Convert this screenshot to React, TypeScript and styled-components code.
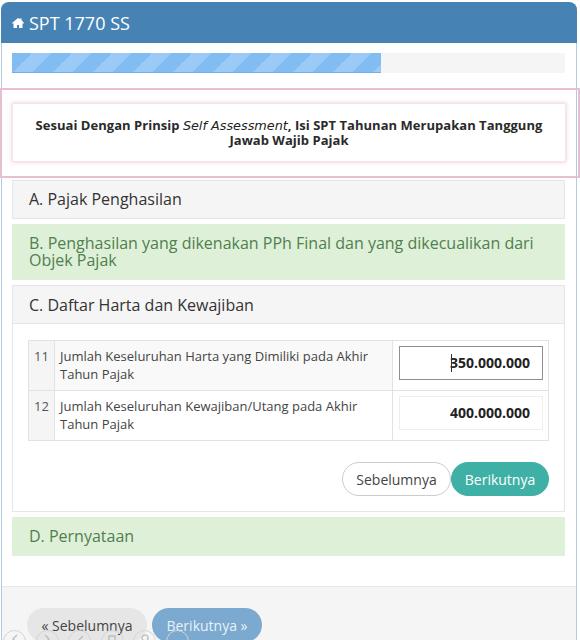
import React from "react";
import styled, { createGlobalStyle } from "styled-components";

const Global = createGlobalStyle`
  html, body { margin: 0; padding: 0; background: #fff; }
  body { width: 580px; height: 640px; overflow: hidden; font-family: "Open Sans", "Liberation Sans", sans-serif; color: #333; }
  * { box-sizing: border-box; }
`;
const Page = styled.div`
  position: relative; width: 580px; height: 640px; overflow: hidden; padding: 2px 3px 0 1px;
`;
const Panel = styled.section`
  height: 660px; border: 1px solid #b4cbdf; border-top: 0; border-radius: 8px 8px 0 0; display: flex; flex-direction: column;
`;
const Header = styled.header`
  height: 41px; margin: 0 -1px; flex: none; background: #4682b4; border-radius: 8px 8px 0 0; color: #fff;
  display: flex; align-items: center; gap: 5px; padding: 0 11px; font-size: 18px; line-height: 20px;
`;
const Body = styled.div`
  padding: 10px 10px 0 10px; flex: none; height: 543px;
`;
const Progress = styled.div`
  height: 20px; width: 553px; background: #f5f5f5; overflow: hidden;
`;
const Fill = styled.div<{ $pct: number }>`
  height: 100%; width: ${p => p.$pct}%; border-bottom: 1px solid #6fb0ec;
  background-color: #81bdf3;
  background-image: linear-gradient(-45deg, rgba(255,255,255,.2) 25%, transparent 25%, transparent 50%, rgba(255,255,255,.2) 50%, rgba(255,255,255,.2) 75%, transparent 75%);
  background-size: 40px 40px;
`;
const Notice = styled.div`
  margin-top: 30px; height: 59px; width: 554px; background: #fff; border: 1px solid #f6e3ea; box-shadow: 0 0 4px rgba(214,130,165,.45);
  display: flex; align-items: center; justify-content: center; text-align: center; padding: 0 10px;
  font-size: 13px; line-height: 14px; font-weight: 700; color: #2a2a2a; letter-spacing: .03px;
  em { font-family: "DejaVu Sans", sans-serif; font-size: 12.8px; line-height: 14px; letter-spacing: 0; font-style: italic; font-weight: 400; color: #222; }
`;
const Highlight = styled.div`
  position: absolute; left: 0; top: 88px; width: 580px; height: 90px; border: 2px solid #e8bfd0; pointer-events: none;
`;
const Accordion = styled.div`
  margin-top: 18px; display: flex; flex-direction: column; gap: 5px; width: 553px;
`;
const Title = styled.div<{ $done?: boolean }>`
  font-size: 16px; line-height: 17px; padding: ${p => (p.$done ? "11px 17px" : "0 16px")};
  background: ${p => (p.$done ? "#dff0d8" : "#f5f5f5")};
  color: ${p => (p.$done ? "#4f7f4f" : "#333")};
  ${p => !p.$done && "height: 39px; display: flex; align-items: center; border: 1px solid #e6e6e6;"}
`;
const OpenItem = styled.div`
  border: 1px solid #e6e6e6; height: 227px;
`;
const OpenTitle = styled.div`
  height: 38px; background: #f5f5f5; border-bottom: 1px solid #e6e6e6; font-size: 16px; display: flex; align-items: center; padding: 0 16px;
`;
const OpenBody = styled.div`
  padding: 16px 15px 15px;
`;
const Table = styled.table`
  width: 521px; border-collapse: collapse; table-layout: fixed; font-size: 13px; line-height: 18px; color: #444;
  td { border: 1px solid #e2e2e2; padding: 0; vertical-align: top; }
  tr:first-child td { background: #f9f9f9; }
`;
const Num = styled.td`
  width: 26px; text-align: center; background: #f5f5f5 !important; color: #555; padding-top: 6px !important;
`;
const Label = styled.td`
  width: 338px; padding: 6px 12px 0 5px !important; height: 50px;
`;
const ValueCell = styled.td`
  background: #fff !important; padding: 5px 5px 5px 6px !important;
`;
const Amount = styled.div<{ $active?: boolean }>`
  position: relative; height: 34px; background: #fff; border: 1px solid ${p => (p.$active ? "#8a8f93" : "#eeeeee")};
  text-align: right; font-size: 14px; font-weight: 700; line-height: 32px; padding-right: 12px; color: #222;
`;
const Caret = styled.i`
  position: absolute; left: 51px; top: 7px; width: 1px; height: 18px; background: #333;
`;
const StepButtons = styled.div`
  display: flex; justify-content: flex-end; margin-top: 21px;
`;
const Pill = styled.div<{ $primary?: boolean }>`
  height: 34px; border-radius: 17px; display: flex; align-items: center; justify-content: center; font-size: 14px;
  width: ${p => (p.$primary ? "98px" : "109px")};
  background: ${p => (p.$primary ? "#3fb0a6" : "#fff")};
  color: ${p => (p.$primary ? "#fff" : "#444")};
  border: 1px solid ${p => (p.$primary ? "#3fb0a6" : "#ccc")};
`;
const Footer = styled.footer`
  flex: 1; background: #f5f5f5; border-top: 1px solid #e8e8e8; padding: 21px 25px; display: flex; gap: 5px;
`;
const NavBtn = styled.div<{ $primary?: boolean }>`
  height: 34px; border-radius: 17px; display: flex; align-items: center; justify-content: center; font-size: 14px;
  width: ${p => (p.$primary ? "110px" : "120px")};
  background: ${p => (p.$primary ? "#7ba9cf" : "#e6e6e6")};
  color: ${p => (p.$primary ? "#eaf2f8" : "#444")};
`;
const Tools = styled.div`
  position: absolute; left: 3px; top: 630px; display: flex; gap: 9.5px;
`;
const Tool = styled.div`
  width: 23px; height: 23px; border-radius: 50%; border: 1px solid #d4d4d4; display: flex; justify-content: center; padding-top: 3px;
  svg { width: 10px; height: 10px; stroke: #bdbdbd; fill: none; stroke-width: 1.4; }
`;

const tools = ["M7 1 3 5l4 4", "M3 1l4 4-4 4", "M2 8 8 2", "M2 2h6v6H2z", "M5 1a3 3 0 1 0 .1 0", ""];

export default function App() {
  return (
    <Page>
      <Global />
      <Panel>
        <Header>
          <svg width="12" height="12" viewBox="0 0 12 12" fill="#fff" aria-hidden="true">
            <path d="M6 1 0 6l.7.8L1.500 6.200V11h3.500V8h2v3h3.500V6.200l.8.6.7-.8L9.500 3.100V1.500H8v.4L6 1z" />
          </svg>
          SPT 1770 SS
        </Header>
        <Body>
          <Progress><Fill $pct={66.7} /></Progress>
          <Notice>
            <span>Sesuai Dengan Prinsip <em>Self Assessment</em>, Isi SPT Tahunan Merupakan Tanggung Jawab Wajib Pajak</span>
          </Notice>
          <Accordion>
            <Title>A. Pajak Penghasilan</Title>
            <Title $done>B. Penghasilan yang dikenakan PPh Final dan yang dikecualikan dari Objek Pajak</Title>
            <OpenItem>
              <OpenTitle>C. Daftar Harta dan Kewajiban</OpenTitle>
              <OpenBody>
                <Table>
                  <tbody>
                    <tr>
                      <Num>11</Num>
                      <Label>Jumlah Keseluruhan Harta yang Dimiliki pada Akhir Tahun Pajak</Label>
                      <ValueCell><Amount $active><Caret />350.000.000</Amount></ValueCell>
                    </tr>
                    <tr>
                      <Num>12</Num>
                      <Label>Jumlah Keseluruhan Kewajiban/Utang pada Akhir Tahun Pajak</Label>
                      <ValueCell><Amount>400.000.000</Amount></ValueCell>
                    </tr>
                  </tbody>
                </Table>
                <StepButtons>
                  <Pill>Sebelumnya</Pill>
                  <Pill $primary>Berikutnya</Pill>
                </StepButtons>
              </OpenBody>
            </OpenItem>
            <Title $done>D. Pernyataan</Title>
          </Accordion>
        </Body>
        <Footer>
          <NavBtn>« Sebelumnya</NavBtn>
          <NavBtn $primary>Berikutnya »</NavBtn>
        </Footer>
      </Panel>
      <Highlight />
      <Tools>
        {tools.map((d, i) => (
          <Tool key={i}><svg viewBox="0 0 10 10"><path d={d} /></svg></Tool>
        ))}
      </Tools>
    </Page>
  );
}
